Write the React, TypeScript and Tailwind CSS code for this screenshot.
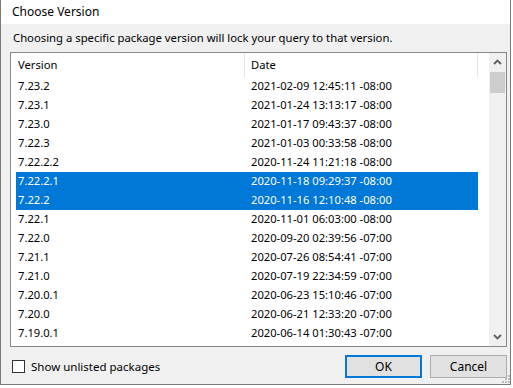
import React from "react";

const rows: [string, string][] = [
  ["7.23.2", "2021-02-09 12:45:11 -08:00"],
  ["7.23.1", "2021-01-24 13:13:17 -08:00"],
  ["7.23.0", "2021-01-17 09:43:37 -08:00"],
  ["7.22.3", "2021-01-03 00:33:58 -08:00"],
  ["7.22.2.2", "2020-11-24 11:21:18 -08:00"],
  ["7.22.2.1", "2020-11-18 09:29:37 -08:00"],
  ["7.22.2", "2020-11-16 12:10:48 -08:00"],
  ["7.22.1", "2020-11-01 06:03:00 -08:00"],
  ["7.22.0", "2020-09-20 02:39:56 -07:00"],
  ["7.21.1", "2020-07-26 08:54:41 -07:00"],
  ["7.21.0", "2020-07-19 22:34:59 -07:00"],
  ["7.20.0.1", "2020-06-23 15:10:46 -07:00"],
  ["7.20.0", "2020-06-21 12:33:20 -07:00"],
  ["7.19.0.1", "2020-06-14 01:30:43 -07:00"],
];

const selected = new Set(["7.22.2.1", "7.22.2"]);

const Chevron = ({ up }: { up?: boolean }) => (
  <svg width="9" height="6" viewBox="0 0 9 6" className="block">
    <path
      d={up ? "M1 5 L4.5 1.5 L8 5" : "M1 1 L4.5 4.5 L8 1"}
      fill="none"
      stroke="#606060"
      strokeWidth="1.8"
    />
  </svg>
);

export default function App() {
  return (
    <div
      className="w-[513px] h-[388px] bg-white overflow-hidden text-black"
      style={{ fontFamily: '"Noto Sans", "Open Sans", sans-serif' }}
    >
      <div className="w-[511px] h-[385px] flex flex-col border-x border-b border-[#7a7a7a]">
        {/* title bar */}
        <div className="h-[24px] bg-white flex items-center pl-[11px] text-[12px]">
          Choose Version
        </div>

        <div className="flex-1 bg-[#f0f0f0] flex flex-col pl-[9px] pr-[3px] relative">
          <div className="mt-[6px] h-[16px] leading-[16px] text-[11.3px] pl-[3px]">
            Choosing a specific package version will lock your query to that version.
          </div>

          {/* list */}
          <div className="mt-[6px] h-[295px] border border-[#828790] bg-white flex">
            <div className="flex-1 pl-[5px] flex flex-col text-[11.2px]">
              <div className="h-[24px] flex items-center w-[462px]">
                <div className="w-[228px] pl-[2px] h-full flex items-center">Version</div>
                <div className="w-px h-full bg-[#e5e5e5]" />
                <div className="w-[232px] pl-[6px] h-full flex items-center">Date</div>
                <div className="w-px h-full bg-[#e5e5e5]" />
              </div>
              {rows.map(([v, d]) => (
                <div
                  key={v}
                  className={`h-[19px] w-[462px] flex items-center ${
                    selected.has(v) ? "bg-[#0078d7] text-white" : ""
                  }`}
                >
                  <div className="w-[229px] pl-[2px]">{v}</div>
                  <div className="pl-[6px]">{d}</div>
                </div>
              ))}
            </div>

            {/* scrollbar */}
            <div className="w-[17px] bg-[#f0f0f0] flex flex-col items-center">
              <div className="h-[18px] flex items-center justify-center">
                <Chevron up />
              </div>
              <div className="w-[15px] h-[21px] bg-[#cdcdcd] mt-px" />
              <div className="flex-1" />
              <div className="h-[18px] flex items-center justify-center">
                <Chevron />
              </div>
            </div>
          </div>

          {/* footer */}
          <div className="mt-[8px] h-[23px] flex items-center text-[11.5px]">
            <div className="w-[13px] h-[13px] border border-[#333333] bg-white ml-[2px]" />
            <span className="ml-[6px]">Show unlisted packages</span>
            <div className="flex-1" />
            <button className="w-[77px] h-[23px] bg-[#e1e1e1] border-2 border-[#0078d7] text-[12px]">
              OK
            </button>
            <button className="ml-[8px] w-[77px] h-[23px] bg-[#e1e1e1] border border-[#adadad] text-[12px]">
              Cancel
            </button>
          </div>

          {/* resize grip */}
          <svg
            width="9"
            height="9"
            viewBox="0 0 9 9"
            className="absolute right-[-1px] bottom-0"
          >
            {[
              [6, 0],
              [3, 3],
              [6, 3],
              [0, 6],
              [3, 6],
              [6, 6],
            ].map(([x, y]) => (
              <rect key={`${x}-${y}`} x={x} y={y} width="2" height="2" fill="#bcbcbc" />
            ))}
          </svg>
        </div>
      </div>
    </div>
  );
}
